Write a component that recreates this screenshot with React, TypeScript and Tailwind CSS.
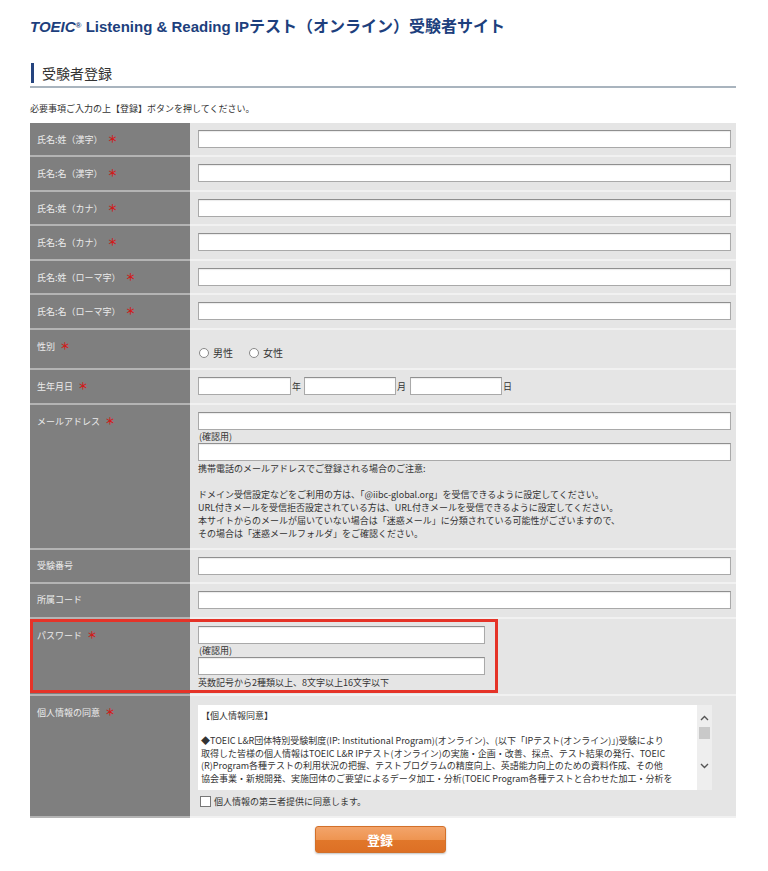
import React from 'react';

const jp = '[font-family:"Noto_Sans_CJK_JP","Noto_Sans",sans-serif]';

function Req() {
  return <span className="ml-[5px] text-[#d01c1c] font-bold text-[10px]">＊</span>;
}

function TextInput({ className = 'w-full' }: { className?: string }) {
  return (
    <div
      className={`h-[18px] bg-white border border-[#a9a9a9] border-t-[#8f8f8f] shadow-[inset_0_1px_1px_rgba(0,0,0,0.08)] ${className}`}
    />
  );
}

function Row({
  label,
  required,
  h,
  children,
  relative,
  overlay
}: {
  label: string;
  required?: boolean;
  h?: string;
  children: React.ReactNode;
  relative?: boolean;
  overlay?: React.ReactNode;
}) {
  return (
    <div className={`flex ${h ?? ''} ${relative ? 'relative' : ''}`}>
      <div className="w-[160px] shrink-0 bg-[#7f7f7f] border-b-2 border-[#b4b4b4] pl-[7px] pt-[9px] text-[9px] leading-[13px] text-[#ececec]">
        {label}
        {required && <Req />}
      </div>
      <div className="flex-1 bg-[#e5e5e5] border-b-2 border-[#f1f1f1] pl-[8px] pr-[5px] pt-[7px] text-[9px] leading-[13px] text-[#333]">
        {children}
      </div>
      {overlay}
    </div>
  );
}

export default function App() {
  return (
    <div className={`min-h-[871px] w-[768px] bg-white ${jp}`}>
      <div className="pl-[30px] pr-[32px] pt-[16px]">
        {/* Site title */}
        <h1 className="text-[15px] leading-[20px] font-bold text-[#1d3f7d] [font-family:'Liberation_Sans','Noto_Sans_CJK_JP',sans-serif]">
          <span className="italic">TOEIC</span>
          <span className="text-[8px] align-[4px]">®</span> Listening &amp; Reading IP
          <span className="text-[16px]">テスト（オンライン）受験者サイト</span>
        </h1>

        {/* Section heading */}
        <div className="mt-[26px] border-b-2 border-[#a9b4be] pb-[3px]">
          <div className="flex items-center">
            <div className="w-[3px] h-[20px] bg-[#25447f] ml-[1px]" />
            <span className="ml-[8px] text-[14px] leading-[20px] text-[#333]">受験者登録</span>
          </div>
        </div>

        <p className="mt-[14px] text-[9px] leading-[13px] text-[#333]">
          必要事項ご入力の上【登録】ボタンを押してください。
        </p>

        {/* Form table */}
        <div className="mt-[8px] w-[706px]">
          <Row label="氏名:姓（漢字）" required h="h-[34px]">
            <TextInput />
          </Row>
          <Row label="氏名:名（漢字）" required h="h-[35px]">
            <TextInput />
          </Row>
          <Row label="氏名:姓（カナ）" required h="h-[34px]">
            <TextInput />
          </Row>
          <Row label="氏名:名（カナ）" required h="h-[35px]">
            <TextInput />
          </Row>
          <Row label="氏名:姓（ローマ字）" required h="h-[34px]">
            <TextInput />
          </Row>
          <Row label="氏名:名（ローマ字）" required h="h-[35px]">
            <TextInput />
          </Row>
          <Row label="性別" required h="h-[40px]">
            <div className="flex items-center gap-[4px] pt-[9px] text-[10px]">
              <span className="w-[10px] h-[10px] rounded-full border border-[#888] bg-white ml-[1px]" />
              <span className="mr-[12px]">男性</span>
              <span className="w-[10px] h-[10px] rounded-full border border-[#888] bg-white" />
              <span>女性</span>
            </div>
          </Row>
          <Row label="生年月日" required h="h-[35px]">
            <div className="flex items-center text-[9px]">
              <TextInput className="w-[93px]" />
              <span className="w-[13px] pl-[1px]">年</span>
              <TextInput className="w-[92px]" />
              <span className="w-[14px] pl-[1px]">月</span>
              <TextInput className="w-[92px]" />
              <span className="pl-[1px]">日</span>
            </div>
          </Row>
          <Row label="メールアドレス" required h="h-[145px]">
            <TextInput />
            <div className="h-[13px] leading-[13px] pl-[1px]">(確認用)</div>
            <TextInput />
            <div className="mt-[1px] leading-[13px]">
              <div>携帯電話のメールアドレスでご登録される場合のご注意:</div>
              <div className="h-[13px]" />
              <div>ドメイン受信設定などをご利用の方は、「@iibc-global.org」を受信できるように設定してください。</div>
              <div>URL付きメールを受信拒否設定されている方は、URL付きメールを受信できるように設定してください。</div>
              <div>本サイトからのメールが届いていない場合は「迷惑メール」に分類されている可能性がございますので、</div>
              <div>その場合は「迷惑メールフォルダ」をご確認ください。</div>
            </div>
          </Row>
          <Row label="受験番号" h="h-[34px]">
            <TextInput />
          </Row>
          <Row label="所属コード" h="h-[35px]">
            <TextInput />
          </Row>
          <Row
            label="パスワード"
            required
            h="h-[77px]"
            relative
            overlay={
              <div className="absolute left-0 top-0 w-[468px] h-[74px] border-[3px] border-[#e53328] pointer-events-none" />
            }
          >
            <TextInput className="w-[287px]" />
            <div className="h-[13px] leading-[13px] pl-[1px]">(確認用)</div>
            <TextInput className="w-[287px]" />
            <div className="mt-[1px] leading-[13px]">英数記号から2種類以上、8文字以上16文字以下</div>
          </Row>
          <Row label="個人情報の同意" required h="h-[122px]">
            <div className="flex w-[514px] h-[85px] mt-[2px]">
              <div className="flex-1 bg-white overflow-hidden pl-[3px] pt-[5px] text-[9px] leading-[12.5px] text-[#333] whitespace-nowrap">
                <div>【個人情報同意】</div>
                <div className="h-[12.5px]" />
                <div>◆TOEIC L&amp;R団体特別受験制度(IP: Institutional Program)(オンライン)、(以下「IPテスト(オンライン)」)受験により</div>
                <div>取得した皆様の個人情報はTOEIC L&amp;R IPテスト(オンライン)の実施・企画・改善、採点、テスト結果の発行、TOEIC</div>
                <div>(R)Program各種テストの利用状況の把握、テストプログラムの精度向上、英語能力向上のための資料作成、その他</div>
                <div>協会事業・新規開発、実施団体のご要望によるデータ加工・分析(TOEIC Program各種テストと合わせた加工・分析を</div>
              </div>
              <div className="w-[15px] bg-[#eeeeee] flex flex-col items-center pt-[6px]">
                <svg width="9" height="6" viewBox="0 0 9 6" className="mt-[4px]">
                  <path d="M1 5 L4.5 1.5 L8 5" fill="none" stroke="#555" strokeWidth="1.4" />
                </svg>
                <div className="mt-[6px] w-[11px] h-[12px] bg-[#c9c9c9]" />
                <svg width="9" height="6" viewBox="0 0 9 6" className="mt-[24px]">
                  <path d="M1 1 L4.5 4.5 L8 1" fill="none" stroke="#555" strokeWidth="1.4" />
                </svg>
              </div>
            </div>
            <div className="flex items-center mt-[5px] text-[9px]">
              <span className="w-[11px] h-[11px] border border-[#777] bg-white ml-[2px] mr-[3px]" />
              <span>個人情報の第三者提供に同意します。</span>
            </div>
          </Row>
        </div>

        {/* Submit */}
        <div className="flex justify-center mt-[8px] pr-[6px]">
          <button className="w-[131px] h-[27px] rounded-[3px] border border-[#d2702a] bg-[linear-gradient(to_bottom,#f3a46a_0%,#ee9552_50%,#e1772a_52%,#dd7025_100%)] shadow-[0_1px_2px_rgba(0,0,0,0.25)] text-white text-[13px] font-bold leading-none">
            登録
          </button>
        </div>
      </div>
    </div>
  );
}
